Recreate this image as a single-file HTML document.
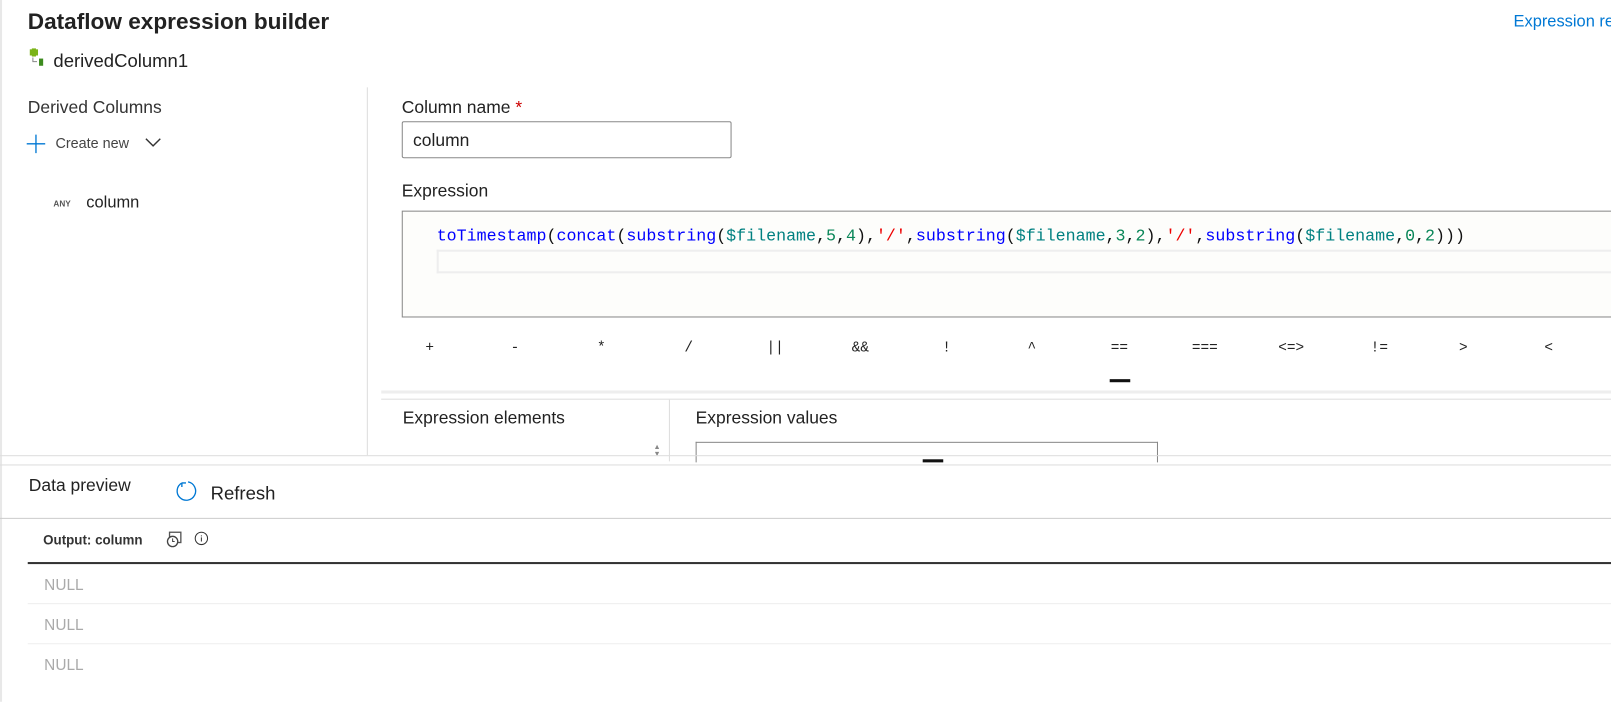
<!DOCTYPE html>
<html><head><meta charset="utf-8"><style>
*{margin:0;padding:0;box-sizing:border-box}
body{width:1611px;height:683px;overflow:hidden;background:#fff;font-family:"Liberation Sans",sans-serif;color:#222;position:relative}
#w{position:absolute;left:0;top:0;width:1568px;height:665px;transform:scale(1.0275);transform-origin:0 0}
.a{position:absolute;white-space:nowrap}
.mono{font-family:"Liberation Mono",monospace;font-size:16.2px}
.b{color:#0000ff}.t{color:#008080}.g{color:#098658}.r{color:#e00}.k{color:#111}
.op{position:absolute;top:331px;font-size:14px;color:#222;font-family:"Liberation Mono",monospace}
</style></head><body><div id="w">
<div class="a" style="left:0;top:0;width:2px;height:683px;background:#e8e8e8"></div>
<div class="a" style="left:27px;top:8px;font-size:22px;font-weight:bold;color:#222">Dataflow expression builder</div>
<div class="a" style="left:1473px;top:13px;font-size:16px;color:#0078d4">Expression re</div>
<svg class="a" style="left:27px;top:47px" width="20" height="20"><rect x="2" y="1" width="8" height="6" fill="#7ab317"/><rect x="4" y="0" width="4" height="8" fill="#7ab317"/><path d="M5 9v4h4" stroke="#888" fill="none"/><rect x="11" y="10" width="4" height="7" fill="#3d8b1f"/></svg>
<div class="a" style="left:52px;top:49px;font-size:18px">derivedColumn1</div>
<div class="a" style="left:357px;top:85px;width:1px;height:358px;background:#ddd"></div>
<div class="a" style="left:27px;top:95px;font-size:17px;color:#333">Derived Columns</div>
<svg class="a" style="left:25px;top:130px" width="20" height="20"><path d="M10 1v18M1 10h18" stroke="#0078d4" stroke-width="1.3"/></svg>
<div class="a" style="left:54px;top:131px;font-size:14px;color:#444">Create new</div>
<svg class="a" style="left:141px;top:133px" width="16" height="12"><path d="M1 2l7 7 7-7" stroke="#333" fill="none" stroke-width="1.4"/></svg>
<div class="a" style="left:52px;top:194px;font-size:8px;font-weight:bold;color:#555">ANY</div>
<div class="a" style="left:84px;top:189px;font-size:16px">column</div>
<div class="a" style="left:391px;top:95px;font-size:17px">Column name <span style="color:#c00">*</span></div>
<div class="a" style="left:391px;top:118px;width:321px;height:36px;border:1px solid #888;border-radius:2px;font-size:17px;padding:8px 10px">column</div>
<div class="a" style="left:391px;top:176px;font-size:17px">Expression</div>
<div class="a" style="left:391px;top:205px;width:1230px;height:104px;border:1px solid #888;background:#fdfdfb"></div>
<div class="a mono" style="left:425px;top:221px"><span class="b">toTimestamp</span><span class="k">(</span><span class="b">concat</span><span class="k">(</span><span class="b">substring</span><span class="k">(</span><span class="t">$filename</span><span class="k">,</span><span class="g">5</span><span class="k">,</span><span class="g">4</span><span class="k">),</span><span class="r">'/'</span><span class="k">,</span><span class="b">substring</span><span class="k">(</span><span class="t">$filename</span><span class="k">,</span><span class="g">3</span><span class="k">,</span><span class="g">2</span><span class="k">),</span><span class="r">'/'</span><span class="k">,</span><span class="b">substring</span><span class="k">(</span><span class="t">$filename</span><span class="k">,</span><span class="g">0</span><span class="k">,</span><span class="g">2</span><span class="k">)))</span></div>
<div class="a" style="left:425px;top:243px;width:1200px;height:23px;border:2px solid #eee;border-right:none"></div>
<div class="op" style="left:414px">+</div><div class="op" style="left:497px">-</div><div class="op" style="left:581px">*</div><div class="op" style="left:666px">/</div><div class="op" style="left:746px">||</div><div class="op" style="left:829px">&amp;&amp;</div><div class="op" style="left:917px">!</div><div class="op" style="left:1000px">^</div><div class="op" style="left:1081px">==</div><div class="op" style="left:1160px">===</div><div class="op" style="left:1244px">&lt;=&gt;</div><div class="op" style="left:1334px">!=</div><div class="op" style="left:1420px">&gt;</div><div class="op" style="left:1503px">&lt;</div>
<div class="a" style="left:1080px;top:369px;width:20px;height:3px;background:#111"></div>
<div class="a" style="left:371px;top:380px;width:1240px;height:3px;background:#eee"></div>
<div class="a" style="left:371px;top:388px;width:1240px;height:1px;background:#ddd"></div>
<div class="a" style="left:651px;top:389px;width:1px;height:60px;background:#ddd"></div>
<div class="a" style="left:392px;top:397px;font-size:17px">Expression elements</div>
<div class="a" style="left:677px;top:397px;font-size:17px">Expression values</div>
<div class="a" style="left:636px;top:432px;font-size:7px;color:#888;line-height:7px">▲<br>▼</div>
<div class="a" style="left:677px;top:430px;width:450px;height:20px;border:1px solid #888;border-bottom:none"></div>
<div class="a" style="left:0;top:443px;width:1611px;height:1px;background:#ddd"></div>
<div class="a" style="left:898px;top:447px;width:20px;height:3px;background:#111"></div>
<div class="a" style="left:0;top:452px;width:1611px;height:1px;background:#ddd"></div>
<div class="a" style="left:28px;top:463px;font-size:17px">Data preview</div>
<svg class="a" style="left:171px;top:467px" width="22" height="22"><path d="M6 3A9 9 0 1 0 12 2" stroke="#0078d4" fill="none" stroke-width="1.3"/><path d="M6 3v4M6 3h4" stroke="#0078d4" fill="none" stroke-width="1.3"/></svg>
<div class="a" style="left:205px;top:470px;font-size:18px">Refresh</div>
<div class="a" style="left:0;top:504px;width:1611px;height:1px;background:#ccc"></div>
<div class="a" style="left:42px;top:518px;font-size:13px;font-weight:bold;color:#333">Output: column</div>
<svg class="a" style="left:160px;top:515px" width="20" height="20"><rect x="5" y="3" width="11" height="10" fill="none" stroke="#555" stroke-width="1.3"/><circle cx="8" cy="12" r="5" fill="#fff" stroke="#444" stroke-width="1.3"/><path d="M8 9v3h2" stroke="#444" fill="none"/></svg>
<svg class="a" style="left:189px;top:517px" width="14" height="14"><circle cx="7" cy="7" r="6" fill="none" stroke="#333"/><path d="M7 6v4M7 4v1" stroke="#333"/></svg>
<div class="a" style="left:27px;top:547px;width:1584px;height:2px;background:#333"></div>
<div class="a" style="left:43px;top:561px;font-size:15px;color:#aaa">NULL</div>
<div class="a" style="left:27px;top:587px;width:1584px;height:1px;background:#eee"></div>
<div class="a" style="left:43px;top:600px;font-size:15px;color:#aaa">NULL</div>
<div class="a" style="left:27px;top:626px;width:1584px;height:1px;background:#eee"></div>
<div class="a" style="left:43px;top:639px;font-size:15px;color:#aaa">NULL</div>
</div></body></html>
